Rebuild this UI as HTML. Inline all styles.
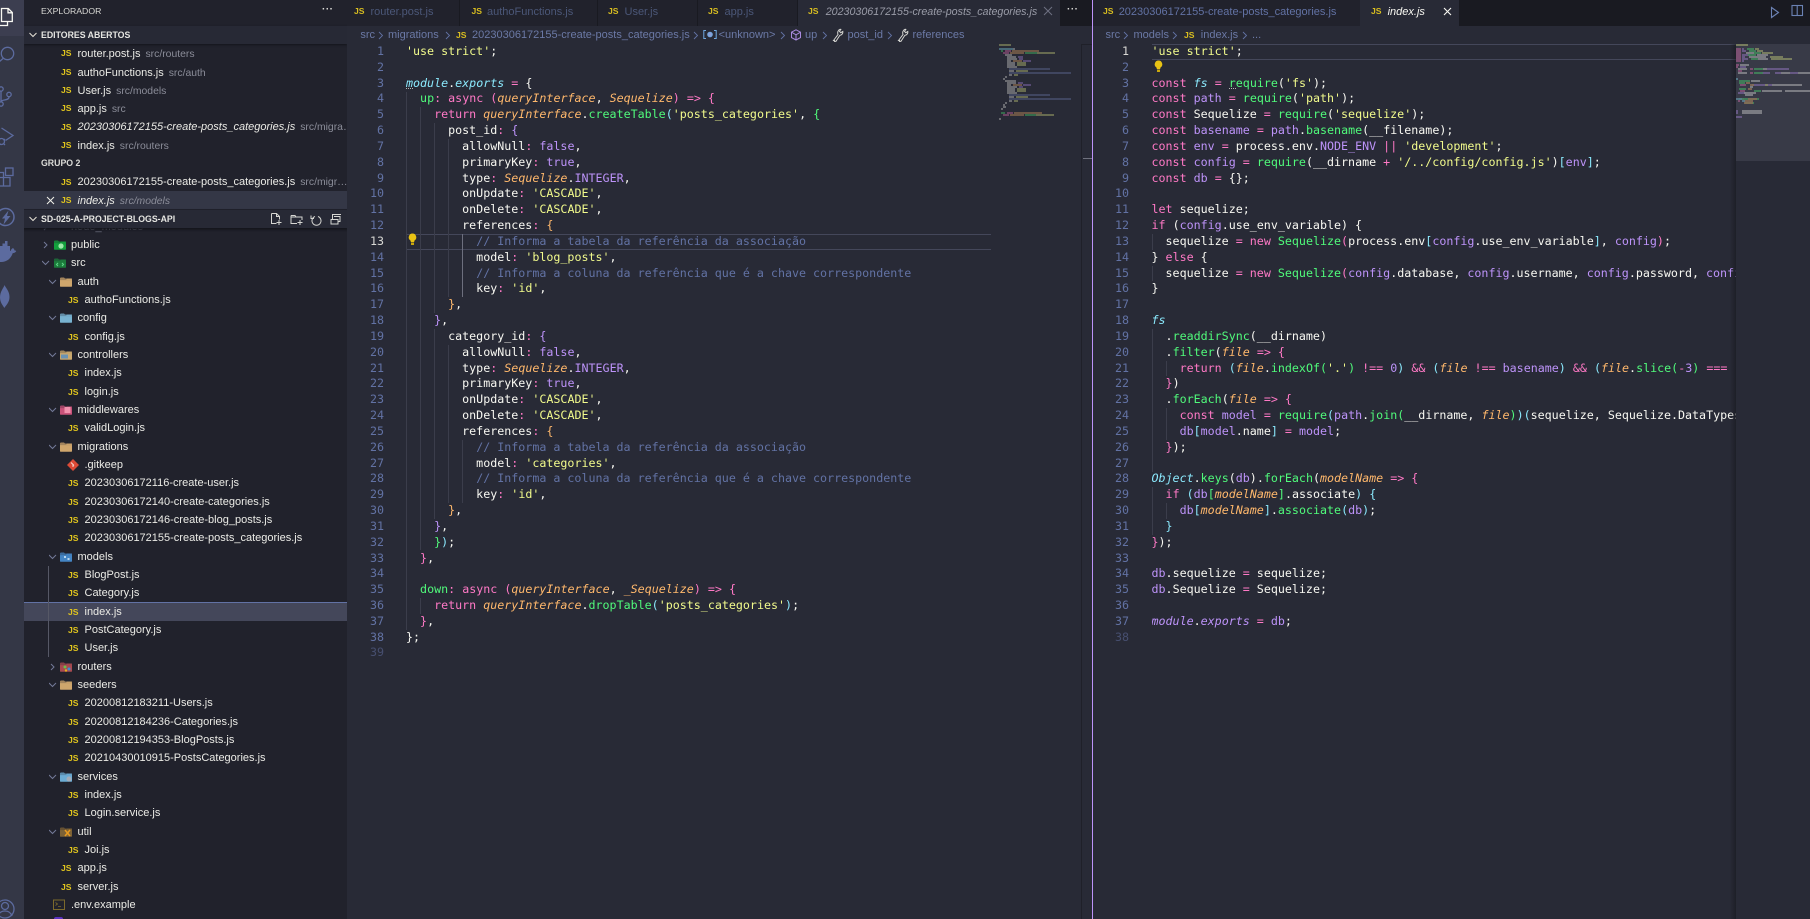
<!DOCTYPE html>
<html lang="pt"><head><meta charset="utf-8"><title>VS Code</title>
<style>
html,body{margin:0;padding:0;width:1810px;height:919px;overflow:hidden;background:#282a36}
body{position:relative;font-family:"Liberation Sans",sans-serif;color:#f8f8f2}
.abs,.r>*,.tab,.bc,.tt{position:absolute}
#act{position:absolute;left:0;top:0;width:24px;height:919px;background:#343746;overflow:hidden}
#side{position:absolute;left:24px;top:0;width:323px;height:919px;background:#21222c;overflow:hidden}
#sb{position:absolute;left:-24px;top:0;width:347px;height:919px;overflow:hidden}
.r{position:absolute;left:0;width:347px;height:18.33px;line-height:19.2px;font-size:11px;color:#ebebe6;white-space:pre}
.r span{top:0;white-space:pre}
.ed{line-height:20.3px}
.j{font:bold 8.6px/18px "Liberation Sans",sans-serif;color:#e2c61e;top:0}
.j1{left:61px}.j2{left:68px}
.t1{left:71px}.t2{left:77.5px}.t3{left:84.5px}
.d{color:#8b8d99;font-size:10.4px;margin-left:5px;position:static!important}
.n{position:static!important}
.fi{position:absolute;top:3px;width:12px;height:12px}
.f1{left:53.5px}.f2{left:59.5px}
.ch{position:absolute;top:5px;width:8px;height:8px;fill:none;stroke:#737a98;stroke-width:1}
.c1{left:42px}.c2{left:49px}
.sec{position:absolute;left:24px;width:323px;height:18.3px;background:#272935;box-shadow:0 1px 2px #14151b}
.secT{position:absolute;left:41px;font:bold 8.75px/18.3px "Liberation Sans",sans-serif;color:#e6e6e2;white-space:pre}
.tab{top:0;height:26px;background:#21222c;border-right:1px solid #191a21;box-sizing:border-box}
.tt{top:0;line-height:24.5px;font-size:11px;color:#4b5778;white-space:pre}
.bc{top:26px;line-height:19px;font-size:11px;color:#6b79a6;white-space:pre}
.jst{position:absolute;font:bold 8.6px/22px "Liberation Sans",sans-serif;color:#d9be20;top:0}
.jsb{position:absolute;font:bold 8.6px/18px "Liberation Sans",sans-serif;color:#d9be20;top:26px}
.cv{position:absolute;top:31px;width:6px;height:9px;fill:none;stroke:#6272a4;stroke-width:.9}
.code{position:absolute;top:44px;width:585px;height:875px;overflow:hidden;font:11.67px/15.83px "DejaVu Sans Mono",monospace;white-space:normal;font-variant-ligatures:none;color:#f8f8f2}
.code div{white-space:pre}
.code div,.num div{height:15.83px}
.num{position:absolute;top:44px;text-align:right;font:11.67px/15.83px "DejaVu Sans Mono",monospace;color:#6272a4;width:40px}
.code i{font-style:normal}
.p{color:#ff79c6}.g{color:#50fa7b}.y{color:#f1fa8c}.c{color:#8be9fd}.v{color:#bd93f9}.m{color:#6272a4}.q{color:#ffb86c}
.o{color:#ffb86c;font-style:italic!important}.ci{color:#8be9fd;font-style:italic!important}.vi{color:#bd93f9;font-style:italic!important}
.hl{position:absolute;height:15.5px;border-top:1px solid #44475a;border-bottom:1px solid #44475a;box-sizing:border-box}
.gd{position:absolute;width:1px;background:#3b3d4b}
</style></head><body>

<svg width="0" height="0" style="position:absolute"><defs>
<symbol id="fo" viewBox="0 0 12 12"><path d="M0 2.5C0 2 .4 1.500 1 1.500h3l1 1h5.500c.5 0 .9.4.9.9V4H0z" fill="currentColor" opacity=".75"/><path d="M0 4.200h12V10c0 .5-.4.8-.8.8H.8C.4 10.800 0 10.500 0 10z" fill="currentColor"/><path d="M0 4h6l1.200-1.500H12V4.500H0z" fill="currentColor" opacity=".85"/></symbol>
</defs></svg>

<!-- activity bar -->
<div id="act">
<div class="abs" style="left:0;top:0;width:24px;height:36px;background:#3c3e50"></div>
<svg class="abs" style="left:0;top:0" width="24" height="919" fill="none" stroke="#5c6b9f" stroke-width="1.300">
<path d="M1.500 8.500h6.800l4 4v9H1.500zM8 8.500v4.300h4.300M7.500 21.500v4H-1" stroke="#f8f8f2"/>
<circle cx="7.500" cy="53.500" r="6.200"/><path d="M3 58.500L-1 62"/>
<circle cx="1" cy="89" r="2.200"/><circle cx="9" cy="94.500" r="2.200"/><circle cx="1" cy="104" r="2.200"/><path d="M1 91.500v10M9 97c0 4-8 2-8 5"/>
<path d="M1.500 128L13 135.500 5.500 140.500"/><circle cx="1.500" cy="141.500" r="3"/><path d="M5 139l-1 1M5 142H4M5 145l-1-1"/>
<rect x="5.500" y="168" width="7.500" height="7.500"/><path d="M-1 172.500h4.500v5h6.500v8.500H-1M3.500 177.500v8.500M-1 177.500h4.500"/>
<circle cx="5.500" cy="217" r="8.500" stroke-width="1.500"/><path d="M8.500 210.500L2 218.500h3l-1.500 6L10.500 216H7z" fill="#5c6b9f" stroke="none"/>
<path d="M0 246h2.500v-2.500H5V241h2.500v5H10v5h.5c.5-1.500 1.500-2.500 2.500-3 1 .7 1.500 1.700 1.500 2.500 1 0 1.500.2 1.700.6-.7 1.400-2 2-3.500 2-1.500 5-5.500 8.900-11.700 8.900H-1V246z" fill="#5c6b9f" stroke="none"/>
<path d="M4.500 285c-.7 3-4.500 6-4.500 12.500 0 5 3 8 4.300 10.500 1.500-2.500 5.200-5.500 5.200-11 0-6-3.800-9-5-12z" fill="#5c6b9f" stroke="none"/>
<circle cx="5" cy="909" r="9"/><circle cx="5" cy="906" r="3.500"/><path d="M-2 916c1-3 3.500-5 7-5s6 2 7 5"/>
</svg>
</div>

<!-- sidebar -->
<div id="side"><div id="sb">
<div class="abs" style="left:41px;top:0;font-size:8.7px;line-height:22px;color:#d8d8d4">EXPLORADOR</div>
<div class="abs" style="left:322px;top:0;font:bold 10px/20px 'Liberation Sans',sans-serif;color:#e0e0dc;letter-spacing:.5px">···</div>

<div class="r ed" style="top:44.330px"><b class="j j1">JS</b><span class="t2"><span class="n">router.post.js</span><span class="d">src/routers</span></span></div>
<div class="r ed" style="top:62.660px"><b class="j j1">JS</b><span class="t2"><span class="n">authoFunctions.js</span><span class="d">src/auth</span></span></div>
<div class="r ed" style="top:81px"><b class="j j1">JS</b><span class="t2"><span class="n">User.js</span><span class="d">src/models</span></span></div>
<div class="r ed" style="top:99.300px"><b class="j j1">JS</b><span class="t2"><span class="n">app.js</span><span class="d">src</span></span></div>
<div class="r" style="top:117.650px"><b class="j j1">JS</b><span class="t2"><span class="n" style="font-style:italic">20230306172155-create-posts_categories.js</span><span class="d">src/migra…</span></span></div>
<div class="r ed" style="top:136px"><b class="j j1">JS</b><span class="t2"><span class="n">index.js</span><span class="d">src/routers</span></span></div>
<div class="r" style="top:154.300px"><span style="left:41px;font:bold 8.750px/18.300px 'Liberation Sans',sans-serif;color:#dcdcd8">GRUPO 2</span></div>
<div class="r" style="top:172.650px"><b class="j j1">JS</b><span class="t2"><span class="n">20230306172155-create-posts_categories.js</span><span class="d">src/migr…</span></span></div>
<div class="r ed" style="top:191px;background:#343746"><svg style="left:46px;top:5px" width="9" height="9" fill="none" stroke="#f0f0ea" stroke-width="1"><path d="M1 1l7 7M8 1l-7 7"/></svg><b class="j j1">JS</b><span class="t2"><span class="n" style="font-style:italic">index.js</span><span class="d" style="font-style:italic">src/models</span></span></div>

<!-- tree -->
<div class="abs" style="left:0;top:228px;width:347px;height:691px;overflow:hidden">
<div class="abs" style="left:47.500px;top:338px;width:1px;height:91px;background:#565866;z-index:2"></div>
<div style="position:relative;height:701.500px;overflow:hidden;top:-10.500px">
<div class="r" style="top:0;color:#6f7180"><svg class="ch c1"><path d="M2 1l3 3-3 3"/></svg><span class="t1">node_modules</span></div>
<div class="r" style="top:18.330px"><svg class="ch c1"><path d="M2 1l3 3-3 3"/></svg><svg class="fi f1" style="color:#12a03c"><use href="#fo"/><circle cx="7" cy="7" r="2.600" fill="#9be8a8"/></svg><span class="t1">public</span></div>
<div class="r" style="top:36.660px"><svg class="ch c1"><path d="M0 2l3.500 3.500L7 2"/></svg><svg class="fi f1" style="color:#1c7c3c"><use href="#fo"/><path d="M4 6l-1.500 1.500L4 9M8 6l1.500 1.500L8 9" stroke="#62d88a" fill="none"/></svg><span class="t1">src</span></div>
<div class="r" style="top:55px"><svg class="ch c2"><path d="M0 2l3.500 3.500L7 2"/></svg><svg class="fi f2" style="color:#cfa66c"><use href="#fo"/></svg><span class="t2">auth</span></div>
<div class="r" style="top:73.300px"><b class="j j2">JS</b><span class="t3">authoFunctions.js</span></div>
<div class="r" style="top:91.650px"><svg class="ch c2"><path d="M0 2l3.500 3.500L7 2"/></svg><svg class="fi f2" style="color:#78b2d0"><use href="#fo"/></svg><span class="t2">config</span></div>
<div class="r" style="top:110px"><b class="j j2">JS</b><span class="t3">config.js</span></div>
<div class="r" style="top:128.300px"><svg class="ch c2"><path d="M0 2l3.500 3.500L7 2"/></svg><svg class="fi f2" style="color:#c9a86e"><use href="#fo"/><rect x="1" y="5.500" width="7" height="4" fill="#6a93b4"/></svg><span class="t2">controllers</span></div>
<div class="r" style="top:146.650px"><b class="j j2">JS</b><span class="t3">index.js</span></div>
<div class="r" style="top:165px"><b class="j j2">JS</b><span class="t3">login.js</span></div>
<div class="r" style="top:183.300px"><svg class="ch c2"><path d="M0 2l3.500 3.500L7 2"/></svg><svg class="fi f2" style="color:#c9527a"><use href="#fo"/><rect x="4.500" y="3" width="6" height="6" fill="#f291ae"/></svg><span class="t2">middlewares</span></div>
<div class="r" style="top:201.650px"><b class="j j2">JS</b><span class="t3">validLogin.js</span></div>
<div class="r" style="top:220px"><svg class="ch c2"><path d="M0 2l3.500 3.500L7 2"/></svg><svg class="fi f2" style="color:#cfa66c"><use href="#fo"/></svg><span class="t2">migrations</span></div>
<div class="r" style="top:238.300px"><svg style="left:66.500px;top:3px" width="12" height="12"><path d="M6 0l6 6-6 6-6-6z" fill="#dc4a36"/><path d="M4 3.500l3 3M6 5v3" stroke="#f5d8d0" fill="none"/></svg><span class="t3">.gitkeep</span></div>
<div class="r" style="top:256.650px"><b class="j j2">JS</b><span class="t3">20230306172116-create-user.js</span></div>
<div class="r" style="top:275px"><b class="j j2">JS</b><span class="t3">20230306172140-create-categories.js</span></div>
<div class="r" style="top:293.300px"><b class="j j2">JS</b><span class="t3">20230306172146-create-blog_posts.js</span></div>
<div class="r" style="top:311.650px"><b class="j j2">JS</b><span class="t3">20230306172155-create-posts_categories.js</span></div>
<div class="r" style="top:330px"><svg class="ch c2"><path d="M0 2l3.500 3.500L7 2"/></svg><svg class="fi f2" style="color:#4485c4"><use href="#fo"/><rect x="4" y="5" width="2" height="2" fill="#b7d6ef"/><rect x="7.500" y="7" width="2" height="2" fill="#b7d6ef"/></svg><span class="t2">models</span></div>
<div class="r" style="top:348.300px"><b class="j j2">JS</b><span class="t3">BlogPost.js</span></div>
<div class="r" style="top:366.650px"><b class="j j2">JS</b><span class="t3">Category.js</span></div>
<div class="r" style="top:384.700px;background:#44475a;border-top:1px solid #6272a4;box-sizing:border-box"><b class="j j2">JS</b><span class="t3">index.js</span></div>
<div class="r" style="top:403.300px"><b class="j j2">JS</b><span class="t3">PostCategory.js</span></div>
<div class="r" style="top:421.650px"><b class="j j2">JS</b><span class="t3">User.js</span></div>
<div class="r" style="top:440px"><svg class="ch c2"><path d="M2 1l3 3-3 3"/></svg><svg class="fi f2" style="color:#a84a50"><use href="#fo"/><circle cx="5" cy="6" r="1.500" fill="#6cc04a"/><circle cx="9" cy="8" r="1.500" fill="#3d8fd0"/><circle cx="6" cy="9.500" r="1.200" fill="#e8b020"/></svg><span class="t2">routers</span></div>
<div class="r" style="top:458.300px"><svg class="ch c2"><path d="M0 2l3.500 3.500L7 2"/></svg><svg class="fi f2" style="color:#cfa66c"><use href="#fo"/></svg><span class="t2">seeders</span></div>
<div class="r" style="top:476.650px"><b class="j j2">JS</b><span class="t3">20200812183211-Users.js</span></div>
<div class="r" style="top:495px"><b class="j j2">JS</b><span class="t3">20200812184236-Categories.js</span></div>
<div class="r" style="top:513.300px"><b class="j j2">JS</b><span class="t3">20200812194353-BlogPosts.js</span></div>
<div class="r" style="top:531.650px"><b class="j j2">JS</b><span class="t3">20210430010915-PostsCategories.js</span></div>
<div class="r" style="top:550px"><svg class="ch c2"><path d="M0 2l3.500 3.500L7 2"/></svg><svg class="fi f2" style="color:#6cacd4"><use href="#fo"/><circle cx="9" cy="8" r="2.500" fill="#a4acb8"/></svg><span class="t2">services</span></div>
<div class="r" style="top:568.300px"><b class="j j2">JS</b><span class="t3">index.js</span></div>
<div class="r" style="top:586.650px"><b class="j j2">JS</b><span class="t3">Login.service.js</span></div>
<div class="r" style="top:605px"><svg class="ch c2"><path d="M0 2l3.500 3.500L7 2"/></svg><svg class="fi f2" style="color:#7d6236"><use href="#fo"/><path d="M5 4l5 6M10 4L5 10" stroke="#e89a20" stroke-width="1.500"/></svg><span class="t2">util</span></div>
<div class="r" style="top:623.300px"><b class="j j2">JS</b><span class="t3">Joi.js</span></div>
<div class="r" style="top:641.650px"><b class="j j1">JS</b><span class="t2">app.js</span></div>
<div class="r" style="top:660px"><b class="j j1">JS</b><span class="t2">server.js</span></div>
<div class="r" style="top:678.300px"><svg style="left:52.500px;top:3px" width="12" height="12" fill="none" stroke="#7c6a2c"><rect x=".5" y="1" width="11" height="9.500"/><path d="M2.500 3.500l2 1.500-2 1.500M5 7.500h3" stroke-width=".8"/></svg><span class="t1">.env.example</span></div>
<div class="abs" style="left:54px;top:699px;width:9px;height:2.500px;background:#5a32c0;border-radius:4px 4px 0 0"></div>
</div></div>
<div class="abs" style="left:24px;top:228px;width:323px;height:4px;background:linear-gradient(#14151b99,#14151b00)"></div>

<!-- section headers -->
<div class="sec" style="top:26px"></div>
<svg class="abs" style="left:29px;top:31px" width="8" height="8" fill="none" stroke="#e6e2d6" stroke-width="1"><path d="M.5 2L4 5.500 7.500 2"/></svg>
<div class="secT" style="top:26px">EDITORES ABERTOS</div>
<div class="sec" style="top:209.500px"></div>
<svg class="abs" style="left:29px;top:215px" width="8" height="8" fill="none" stroke="#e6e2d6" stroke-width="1"><path d="M.5 2L4 5.500 7.500 2"/></svg>
<div class="secT" style="top:209.500px">SD-025-A-PROJECT-BLOGS-API</div>
<svg class="abs" style="left:270px;top:211px" width="74" height="16" fill="none" stroke="#d6d6d2" stroke-width="1">
<path d="M1.500 2.500h5l3 3v3M6.500 2.500v3h3M1.500 2.500v10h5M9 9v5M6.500 11.500h5"/>
<path d="M21 4.500h4l1 1.500h6v3M21 4.500v8h6M21 6h11M30 9v5M27.500 11.500h5"/>
<path d="M49 4.500a4.500 4.500 0 1 1-3 0M42 3.500v3h3" transform="translate(-1 1)"/>
<path d="M64 5.500h6v5h-1.500M61 8.500h7v4.500h-7zM62.500 8.500V3.500h8.500"/>
</svg>
</div></div>

<!-- tab bar -->
<div class="abs" style="left:347px;top:0;width:1463px;height:26px;background:#191a21"></div>
<div class="tab" style="left:347px;width:113px"></div>
<div class="tab" style="left:460px;width:138px"></div>
<div class="tab" style="left:598px;width:100px"></div>
<div class="tab" style="left:698px;width:100px"></div>
<div class="tab" style="left:798px;width:262px;background:#282a36;border:0"></div>
<div class="tab" style="left:1093px;width:267px;border:0"></div>
<div class="tab" style="left:1360px;width:99px;background:#282a36;border:0"></div>

<b class="jst" style="left:354px">JS</b><span class="tt" style="left:370.500px">router.post.js</span>
<b class="jst" style="left:471.500px">JS</b><span class="tt" style="left:487px">authoFunctions.js</span>
<b class="jst" style="left:608px">JS</b><span class="tt" style="left:624.500px">User.js</span>
<b class="jst" style="left:708px">JS</b><span class="tt" style="left:724.500px">app.js</span>
<b class="jst" style="left:808px">JS</b><span class="tt" style="left:825.700px;color:#9a9ca8;font-style:italic;font-size:10.7px">20230306172155-create-posts_categories.js</span>
<svg class="abs" style="left:1043px;top:6px" width="10" height="10" fill="none" stroke="#6e7082" stroke-width="1"><path d="M1 1l8 8M9 1L1 9"/></svg>
<div class="abs" style="left:1067px;top:0;font:bold 10px/20px 'Liberation Sans',sans-serif;color:#d8d8d4;letter-spacing:.5px">···</div>
<b class="jst" style="left:1103px">JS</b><span class="tt" style="left:1118.700px;color:#6272a4">20230306172155-create-posts_categories.js</span>
<b class="jst" style="left:1371px">JS</b><span class="tt" style="left:1387.600px;color:#f8f8f2;font-style:italic">index.js</span>
<svg class="abs" style="left:1443px;top:6.500px" width="9" height="9" fill="none" stroke="#f8f8f2" stroke-width="1.100"><path d="M1 1l7 7M8 1L1 8"/></svg>
<svg class="abs" style="left:1768px;top:4px" width="38" height="16" fill="none" stroke="#6b82b4" stroke-width="1.100"><path d="M3.500 3.500v10l7-5z"/><rect x="24" y="1.500" width="10.500" height="10"/><path d="M29.200 1.500v10"/></svg>

<!-- breadcrumbs left -->
<span class="bc" style="left:360.400px">src</span><svg class="cv" style="left:378px"><path d="M1 1l3.500 3.500L1 8"/></svg>
<span class="bc" style="left:388px">migrations</span><svg class="cv" style="left:445px"><path d="M1 1l3.500 3.500L1 8"/></svg>
<b class="jsb" style="left:456px">JS</b><span class="bc" style="left:472px">20230306172155-create-posts_categories.js</span><svg class="cv" style="left:693px"><path d="M1 1l3.500 3.500L1 8"/></svg>
<svg class="abs" style="left:703px;top:30px" width="14" height="10" fill="none" stroke="#6fa8e0" stroke-width="1"><path d="M3 .5H.8v8H3M11 .5h2.200v8H11"/><circle cx="7" cy="4.500" r="2.300" fill="#8c9fd8"/></svg>
<span class="bc" style="left:718.600px">&lt;unknown&gt;</span><svg class="cv" style="left:780px"><path d="M1 1l3.500 3.500L1 8"/></svg>
<svg class="abs" style="left:790px;top:29px" width="12" height="12" fill="none" stroke="#a98ade" stroke-width="1"><path d="M6 .8l4.500 2.400v5.400L6 11 1.500 8.600V3.200zM1.500 3.200L6 5.800l4.500-2.600M6 5.800V11"/></svg>
<span class="bc" style="left:805px">up</span><svg class="cv" style="left:822px"><path d="M1 1l3.500 3.500L1 8"/></svg>
<svg class="abs" style="left:832px;top:28px" width="12" height="14" fill="none" stroke="#d6d6d2" stroke-width="1"><path d="M1.500 12.500L6 6.500c-.8-2 0-4.500 2-5.200l.8.100-1.300 2 1.300 1.300 2-1.200c.3 2-1 3.600-3 3.900l-4 6.100c-.7.600-1.900-.1-1.300-1z"/></svg>
<span class="bc" style="left:847.500px">post_id</span><svg class="cv" style="left:887px"><path d="M1 1l3.500 3.500L1 8"/></svg>
<svg class="abs" style="left:897px;top:28px" width="12" height="14" fill="none" stroke="#d6d6d2" stroke-width="1"><path d="M1.500 12.500L6 6.500c-.8-2 0-4.500 2-5.200l.8.100-1.300 2 1.300 1.300 2-1.200c.3 2-1 3.600-3 3.900l-4 6.100c-.7.600-1.900-.1-1.300-1z"/></svg>
<span class="bc" style="left:912.500px">references</span>

<!-- breadcrumbs right -->
<span class="bc" style="left:1105.500px">src</span><svg class="cv" style="left:1123px"><path d="M1 1l3.500 3.500L1 8"/></svg>
<span class="bc" style="left:1133.500px">models</span><svg class="cv" style="left:1172px"><path d="M1 1l3.500 3.500L1 8"/></svg>
<b class="jsb" style="left:1184px">JS</b><span class="bc" style="left:1200.800px">index.js</span><svg class="cv" style="left:1242px"><path d="M1 1l3.500 3.500L1 8"/></svg>
<span class="bc" style="left:1252px">...</span>

<!-- left editor -->
<div class="hl" style="left:406px;top:234px;width:585px"></div>
<div class="hl" style="left:1151.500px;top:44px;width:585px"></div>

<div class="gd" style="left:406px;top:91.500px;height:538px"></div>
<div class="gd" style="left:420px;top:107.300px;height:443px"></div>
<div class="gd" style="left:420px;top:598px;height:16px"></div>
<div class="gd" style="left:434px;top:123.200px;height:190px"></div>
<div class="gd" style="left:434px;top:329px;height:190px"></div>
<div class="gd" style="left:448px;top:139px;height:158.300px"></div>
<div class="gd" style="left:448px;top:345px;height:158px"></div>
<div class="gd" style="left:462px;top:234px;height:63.300px;background:#6d6f7e"></div>
<div class="gd" style="left:462px;top:440px;height:63px"></div>

<div class="gd" style="left:1151.500px;top:234px;height:15.800px"></div>
<div class="gd" style="left:1151.500px;top:265.500px;height:15.800px"></div>
<div class="gd" style="left:1151.500px;top:329px;height:142.500px"></div>
<div class="gd" style="left:1151.500px;top:487px;height:47.500px"></div>
<div class="gd" style="left:1165.500px;top:360.600px;height:15.800px"></div>
<div class="gd" style="left:1165.500px;top:408px;height:31.700px"></div>
<div class="gd" style="left:1165.500px;top:503px;height:15.800px"></div>

<div class="num" style="left:344px"><div style="color:#6272a4">1</div><div>2</div><div>3</div><div>4</div><div>5</div><div>6</div><div>7</div><div>8</div><div>9</div><div>10</div><div>11</div><div>12</div><div style="color:#d8d8d4">13</div><div>14</div><div>15</div><div>16</div><div>17</div><div>18</div><div>19</div><div>20</div><div>21</div><div>22</div><div>23</div><div>24</div><div>25</div><div>26</div><div>27</div><div>28</div><div>29</div><div>30</div><div>31</div><div>32</div><div>33</div><div>34</div><div>35</div><div>36</div><div>37</div><div>38</div><div style="color:#474f70">39</div></div>

<div class="code" style="left:406px"><div><i class="y">'use strict'</i>;</div>
<div></div>
<div><i class="ci">module</i>.<i class="ci">exports</i> <i class="p">=</i> {</div>
<div>  <i class="g">up</i><i class="p">:</i> <i class="p">async</i> <i class="p">(</i><i class="o">queryInterface</i>, <i class="o">Sequelize</i><i class="p">)</i> <i class="p">=&gt;</i> <i class="p">{</i></div>
<div>    <i class="p">return</i> <i class="o">queryInterface</i>.<i class="g">createTable</i><i class="c">(</i><i class="y">'posts_categories'</i>, <i class="g">{</i></div>
<div>      post_id<i class="p">:</i> <i class="v">{</i></div>
<div>        allowNull<i class="p">:</i> <i class="v">false</i>,</div>
<div>        primaryKey<i class="p">:</i> <i class="v">true</i>,</div>
<div>        type<i class="p">:</i> <i class="o">Sequelize</i>.<i class="v">INTEGER</i>,</div>
<div>        onUpdate<i class="p">:</i> <i class="y">'CASCADE'</i>,</div>
<div>        onDelete<i class="p">:</i> <i class="y">'CASCADE'</i>,</div>
<div>        references<i class="p">:</i> <i class="q">{</i></div>
<div>          <i class="m">// Informa a tabela da referência da associação</i></div>
<div>          model<i class="p">:</i> <i class="y">'blog_posts'</i>,</div>
<div>          <i class="m">// Informa a coluna da referência que é a chave correspondente</i></div>
<div>          key<i class="p">:</i> <i class="y">'id'</i>,</div>
<div>      <i class="q">}</i>,</div>
<div>    <i class="v">}</i>,</div>
<div>      category_id<i class="p">:</i> <i class="v">{</i></div>
<div>        allowNull<i class="p">:</i> <i class="v">false</i>,</div>
<div>        type<i class="p">:</i> <i class="o">Sequelize</i>.<i class="v">INTEGER</i>,</div>
<div>        primaryKey<i class="p">:</i> <i class="v">true</i>,</div>
<div>        onUpdate<i class="p">:</i> <i class="y">'CASCADE'</i>,</div>
<div>        onDelete<i class="p">:</i> <i class="y">'CASCADE'</i>,</div>
<div>        references<i class="p">:</i> <i class="q">{</i></div>
<div>          <i class="m">// Informa a tabela da referência da associação</i></div>
<div>          model<i class="p">:</i> <i class="y">'categories'</i>,</div>
<div>          <i class="m">// Informa a coluna da referência que é a chave correspondente</i></div>
<div>          key<i class="p">:</i> <i class="y">'id'</i>,</div>
<div>      <i class="q">}</i>,</div>
<div>    <i class="v">}</i>,</div>
<div>    <i class="g">}</i><i class="c">)</i>;</div>
<div>  <i class="p">}</i>,</div>
<div></div>
<div>  <i class="g">down</i><i class="p">:</i> <i class="p">async</i> <i class="p">(</i><i class="o">queryInterface</i>, <i class="o">_Sequelize</i><i class="p">)</i> <i class="p">=&gt;</i> <i class="p">{</i></div>
<div>    <i class="p">return</i> <i class="o">queryInterface</i>.<i class="g">dropTable</i><i class="c">(</i><i class="y">'posts_categories'</i><i class="c">)</i>;</div>
<div>  <i class="p">}</i>,</div>
<div>};</div></div>

<!-- bulb + hints -->
<svg class="abs" style="left:408px;top:233px" width="9" height="13"><path d="M4.500.5a3.800 3.800 0 0 1 2.300 6.800c-.4.400-.6 1-.6 1.700H2.800c0-.7-.2-1.300-.6-1.700A3.800 3.800 0 0 1 4.500.5z" fill="#e8c214"/><rect x="3" y="9.500" width="3" height="2.500" fill="#c9a70e"/></svg>
<svg class="abs" style="left:1154px;top:59.500px" width="9" height="13"><path d="M4.500.5a3.800 3.800 0 0 1 2.300 6.800c-.4.400-.6 1-.6 1.700H2.800c0-.7-.2-1.300-.6-1.700A3.800 3.800 0 0 1 4.500.5z" fill="#e8c214"/><rect x="3" y="9.500" width="3" height="2.500" fill="#c9a70e"/></svg>
<svg class="abs" style="left:406px;top:87px" width="8" height="3"><path d="M0 1.500h7" stroke="#b8b8b4" stroke-dasharray="1 1"/></svg>
<svg class="abs" style="left:1229px;top:87px" width="8" height="3"><path d="M0 1.500h7" stroke="#b8b8b4" stroke-dasharray="1 1"/></svg>

<!-- right editor -->
<div class="num" style="left:1089px"><div style="color:#d8d8d4">1</div><div>2</div><div>3</div><div>4</div><div>5</div><div>6</div><div>7</div><div>8</div><div>9</div><div>10</div><div>11</div><div>12</div><div>13</div><div>14</div><div>15</div><div>16</div><div>17</div><div>18</div><div>19</div><div>20</div><div>21</div><div>22</div><div>23</div><div>24</div><div>25</div><div>26</div><div>27</div><div>28</div><div>29</div><div>30</div><div>31</div><div>32</div><div>33</div><div>34</div><div>35</div><div>36</div><div>37</div><div style="color:#474f70">38</div></div>

<div class="code" style="left:1151.500px"><div><i class="y">'use strict'</i>;</div>
<div></div>
<div><i class="p">const</i> <i class="ci">fs</i> <i class="p">=</i> <i class="g">require</i>(<i class="y">'fs'</i>);</div>
<div><i class="p">const</i> <i class="v">path</i> <i class="p">=</i> <i class="g">require</i>(<i class="y">'path'</i>);</div>
<div><i class="p">const</i> Sequelize <i class="p">=</i> <i class="g">require</i>(<i class="y">'sequelize'</i>);</div>
<div><i class="p">const</i> <i class="v">basename</i> <i class="p">=</i> <i class="v">path</i>.<i class="g">basename</i>(__filename);</div>
<div><i class="p">const</i> <i class="v">env</i> <i class="p">=</i> process.env.<i class="v">NODE_ENV</i> <i class="p">||</i> <i class="y">'development'</i>;</div>
<div><i class="p">const</i> <i class="v">config</i> <i class="p">=</i> <i class="g">require</i>(__dirname <i class="p">+</i> <i class="y">'/../config/config.js'</i>)<i class="c">[</i><i class="v">env</i><i class="c">]</i>;</div>
<div><i class="p">const</i> <i class="v">db</i> <i class="p">=</i> {};</div>
<div></div>
<div><i class="p">let</i> sequelize;</div>
<div><i class="p">if</i> (<i class="v">config</i>.use_env_variable) {</div>
<div>  sequelize <i class="p">=</i> <i class="p">new</i> <i class="g">Sequelize</i><i class="p">(</i>process.env<i class="c">[</i><i class="v">config</i>.use_env_variable<i class="c">]</i>, <i class="v">config</i><i class="p">)</i>;</div>
<div>} <i class="p">else</i> {</div>
<div>  sequelize <i class="p">=</i> <i class="p">new</i> <i class="g">Sequelize</i><i class="p">(</i><i class="v">config</i>.database, <i class="v">config</i>.username, <i class="v">config</i>.password, <i class="v">config</i>.</div>
<div>}</div>
<div></div>
<div><i class="ci">fs</i></div>
<div>  .<i class="g">readdirSync</i>(__dirname)</div>
<div>  .<i class="g">filter</i>(<i class="o">file</i> <i class="p">=&gt;</i> <i class="p">{</i></div>
<div>    <i class="p">return</i> <i class="c">(</i><i class="o">file</i>.<i class="g">indexOf</i><i class="g">(</i><i class="y">'.'</i><i class="g">)</i> <i class="p">!==</i> <i class="v">0</i><i class="c">)</i> <i class="p">&amp;&amp;</i> <i class="c">(</i><i class="o">file</i> <i class="p">!==</i> <i class="v">basename</i><i class="c">)</i> <i class="p">&amp;&amp;</i> <i class="c">(</i><i class="o">file</i>.<i class="g">slice</i><i class="g">(</i><i class="p">-</i><i class="v">3</i><i class="g">)</i> <i class="p">===</i> <i class="y">'.js'</i><i class="c">)</i>;</div>
<div>  <i class="p">}</i>)</div>
<div>  .<i class="g">forEach</i>(<i class="o">file</i> <i class="p">=&gt;</i> <i class="p">{</i></div>
<div>    <i class="p">const</i> <i class="v">model</i> <i class="p">=</i> <i class="g">require</i><i class="c">(</i><i class="v">path</i>.<i class="g">join</i><i class="g">(</i>__dirname, <i class="o">file</i><i class="g">)</i><i class="c">)(</i>sequelize, Sequelize.DataTypes<i class="c">)</i>;</div>
<div>    <i class="v">db</i><i class="c">[</i><i class="v">model</i>.name<i class="c">]</i> <i class="p">=</i> <i class="v">model</i>;</div>
<div>  <i class="p">}</i>);</div>
<div></div>
<div><i class="ci">Object</i>.<i class="g">keys</i>(<i class="v">db</i>).<i class="g">forEach</i>(<i class="o">modelName</i> <i class="p">=&gt;</i> <i class="p">{</i></div>
<div>  <i class="p">if</i> <i class="c">(</i><i class="v">db</i><i class="g">[</i><i class="o">modelName</i><i class="g">]</i>.associate<i class="c">)</i> <i class="c">{</i></div>
<div>    <i class="v">db</i><i class="c">[</i><i class="o">modelName</i><i class="c">]</i>.<i class="g">associate</i><i class="c">(</i><i class="v">db</i><i class="c">)</i>;</div>
<div>  <i class="c">}</i></div>
<div><i class="p">}</i>);</div>
<div></div>
<div><i class="v">db</i>.sequelize <i class="p">=</i> sequelize;</div>
<div><i class="v">db</i>.Sequelize <i class="p">=</i> Sequelize;</div>
<div></div>
<div><i class="vi">module</i>.<i class="vi">exports</i> <i class="p">=</i> <i class="v">db</i>;</div></div>

<!-- purple divider -->
<div class="abs" style="left:1092px;top:0;width:1px;height:919px;background:#bd93f9"></div>

<!-- left overview ruler -->
<div class="abs" style="left:1081px;top:44px;width:11px;height:875px;border-left:1px solid #1f2029;border-top:1px solid #1f2029;box-sizing:border-box"></div>
<div class="abs" style="left:1083px;top:157.500px;width:9px;height:1.500px;background:#6f717e"></div>

<!-- left minimap -->
<svg class="abs" style="left:999px;top:44px" width="82" height="80" viewBox="999 44 82 80" fill="none" stroke-width="1.300" opacity=".5">
<path stroke="#f8f8f2" d="M1005 55h7M1007 57h9M1007 59h10M1007 61h4M1007 63h8M1007 65h8M1007 67h10M1009 71h5M1009 75h3M1005 77h2M1003 79h2M1005 81h11M1007 83h9M1007 85h4M1007 87h10M1007 89h8M1007 91h8M1007 93h10M1009 97h5M1009 101h3M1005 103h2M1003 105h2M1003 107h3M1001 109h2M999 119h2M1013 49h2"/>
<path stroke="#bd93f9" d="M1018 57h5M1019 59h4M1023 61h8M1018 83h5M1023 85h8M1019 87h4"/>
<path stroke="#ffb86c" d="M1012 51h27M1010 53h14M1013 61h9M1013 85h9M1014 113h28M1010 115h14"/>
<path stroke="#f1fa8c" d="M999 45h12M1037 53h18M1017 63h9M1017 65h9M1016 71h12M1014 75h4M1017 89h9M1017 91h9M1016 97h12M1014 101h4M1036 115h18"/>
<path stroke="#50fa7b" d="M1001 51h2M1025 53h12M1001 113h4M1025 115h11"/>
<path stroke="#ff79c6" d="M1005 51h6M1003 53h6M1007 113h6M1003 115h6"/>
<path stroke="#8be9fd" d="M999 49h14"/>
<path stroke="#7486bd" d="M1009 69h41M1009 73h62M1009 95h41M1009 99h62"/>
</svg>

<!-- right minimap -->
<div class="abs" style="left:1736px;top:44px;width:74px;height:875px;background:#282a36;overflow:hidden"><div class="abs" style="left:0;top:0;width:74px;height:117px;background:#383a47"></div></div>
<div class="abs" style="left:1730px;top:44px;width:6px;height:875px;background:linear-gradient(90deg,#14151b00,#14151b88)"></div>
<svg class="abs" style="left:1736px;top:44px" width="74" height="80" viewBox="1736 44 74 80" fill="none" stroke-width="1.300" opacity=".55">
<path stroke="#ff79c6" d="M1736 49h5M1736 51h5M1736 53h5M1736 55h5M1736 57h5M1736 59h5M1736 61h5M1736 65h3M1736 67h2M1750 69h3M1738 71h4M1750 73h3M1740 85h6M1740 91h5M1742 99h2M1738 101h2"/>
<path stroke="#bd93f9" d="M1742 49h2M1742 51h4M1742 55h8M1742 57h3M1742 59h6M1742 61h2M1740 67h6M1767 69h22M1762 73h8M1775 73h6M1790 73h8M1752 85h20M1738 93h8M1736 111h2M1736 113h2M1736 117h6"/>
<path stroke="#50fa7b" d="M1747 49h7M1749 51h7M1754 53h7M1748 55h8M1751 59h7M1754 69h9M1754 73h9M1739 81h11M1739 83h6M1739 89h7M1754 91h7M1739 99h20M1745 103h9"/>
<path stroke="#f1fa8c" d="M1736 45h12M1755 49h4M1757 51h6M1762 53h11M1770 57h13M1771 59h21M1765 85h3"/>
<path stroke="#f8f8f2" d="M1746 53h8M1757 55h11M1749 57h17M1758 59h10M1740 65h9M1738 69h9M1738 73h9M1751 81h9M1762 91h20M1744 93h12M1742 113h20M1742 111h20M1772 85h30M1785 91h25M1763 69h4M1781 73h9M1798 73h12M1750 87h3M1745 95h8"/>
<path stroke="#ffb86c" d="M1746 83h4M1750 85h4M1748 89h4M1748 99h9M1744 101h9M1744 103h9"/>
<path stroke="#8be9fd" d="M1736 79h2M1736 99h6M1742 101h3"/>
</svg>

</body></html>
